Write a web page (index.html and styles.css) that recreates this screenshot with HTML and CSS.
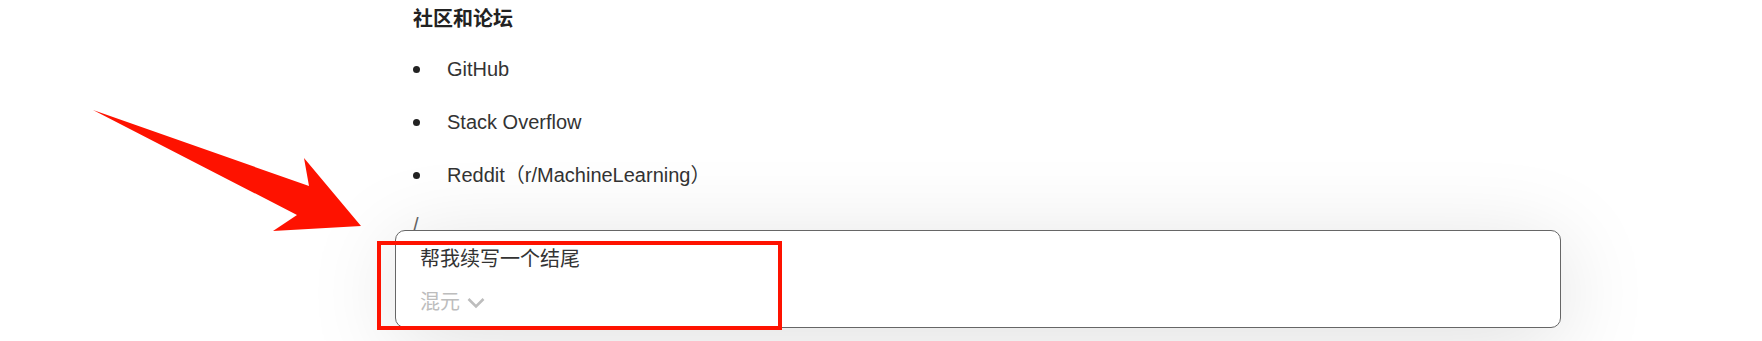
FILE: index.html
```html
<!DOCTYPE html>
<html lang="zh-CN">
<head>
<meta charset="utf-8">
<title>社区和论坛</title>
<link rel="stylesheet" href="styles.css">
</head>
<body>
<div class="editor">
  <h3 class="heading">社区和论坛</h3>
  <ul class="list">
    <li>GitHub</li>
    <li>Stack Overflow</li>
    <li>Reddit（r/MachineLearning）</li>
  </ul>
  <p class="slash">/</p>
  <div class="popup">
    <div class="prompt">帮我续写一个结尾</div>
    <div class="model">混元
      <svg class="chev" width="18" height="12" viewBox="0 0 18 12"><polyline points="1.5,2 9,9.5 16.5,2" fill="none" stroke="#bdbdbd" stroke-width="2.6"/></svg>
    </div>
  </div>
</div>
<svg class="arrow" width="380" height="250" viewBox="0 0 380 250">
  <polygon points="93,110 309,186 304,158 361,226 273,231 297,215" fill="#fe1200"/>
</svg>
<div class="highlight"></div>
</body>
</html>
```
FILE: styles.css
```css
html, body {
  margin: 0;
  padding: 0;
  background: #fff;
}
body {
  position: relative;
  height: 341px;
  overflow: hidden;
  font-family: "Liberation Sans", "Noto Sans CJK SC", sans-serif;
  font-size: 20px;
  color: #333;
}
.editor {
  position: relative;
  margin-left: 395px;
  width: 1149px;
  padding-left: 18px;
}
.heading {
  margin: 0;
  padding-top: 4px;
  margin-bottom: 20px;
  font-size: 20px;
  line-height: 30px;
  font-weight: bold;
  color: #222;
}
.list {
  list-style: none;
  margin: 0;
  padding: 0;
}
.list li {
  display: flex;
  align-items: center;
  gap: 27px;
  line-height: 30px;
  margin-bottom: 23px;
  color: #333;
}
.list li:last-child {
  margin-bottom: 0;
}
.list li::before {
  content: "";
  width: 7px;
  height: 7px;
  border-radius: 50%;
  background: #222;
  flex: none;
}
.slash {
  margin: 20px 0 0;
  line-height: 30px;
  color: #666;
}
.popup {
  position: absolute;
  left: 0;
  top: 230px;
  width: 1166px;
  height: 98px;
  box-sizing: border-box;
  border: 1.3px solid #666;
  border-radius: 10px;
  background: #fff;
  padding: 14px 24px 0;
  box-shadow: 0 14px 90px rgba(0, 0, 0, 0.13);
}
.prompt {
  line-height: 28px;
  color: #333;
}
.model {
  margin-top: 15px;
  line-height: 28px;
  color: #bdbdbd;
  display: flex;
  align-items: center;
  gap: 7px;
}
.chev {
  display: block;
  margin-top: 1px;
}
.arrow {
  position: absolute;
  left: 0;
  top: 0;
}
.highlight {
  position: absolute;
  left: 377px;
  top: 241px;
  width: 405px;
  height: 89px;
  box-sizing: border-box;
  border: 4px solid #fe1200;
}
```
